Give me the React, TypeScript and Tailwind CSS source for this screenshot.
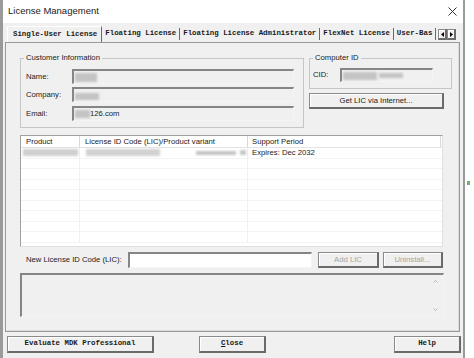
import React from "react";

const ui = "font-['Liberation_Sans',Arial,sans-serif] text-[7.7px] text-[#1a1a1a]";
const mono = "font-['Liberation_Mono',monospace] text-[7.4px] font-bold text-[#1a1a1a]";
const sunken = "border-t-2 border-l-2 border-[#858585] border-r border-b border-r-[#f4f4f4] border-b-[#f4f4f4]";
const raised = "border border-[#8a8a8a] border-r-2 border-b-2 border-r-[#6a6a6a] border-b-[#6a6a6a] bg-[#f0f0f0] shadow-[inset_1px_1px_0_#ffffff]";

function Blur({ className }: { className: string }) {
  return <div className={"bg-[#c4c4c4] blur-[1px] " + className} />;
}

function Field({ children }: { children?: React.ReactNode }) {
  return (
    <div className={"h-[15px] w-[222px] bg-[#f0f0f0] flex items-center pl-[1px] " + sunken}>
      {children}
    </div>
  );
}

// last tab is cut by the scroll arrows in the original dialog
const tabs = [
  "Single-User License",
  "Floating License",
  "Floating License Administrator",
  "FlexNet License",
  "User-Bas",
];

export default function App() {
  const rows = Array.from({ length: 9 });
  return (
    <div className="w-[474px] h-[358px] bg-white flex overflow-hidden">
      <div className="w-[465px] h-full bg-[#f0f0f0] border-l-[3px] border-r-2 border-[#9a9a9a] flex flex-col">
        {/* title bar */}
        <div className="h-[23px] bg-white flex items-center justify-between pl-[5px] pr-[6px]">
          <span className="font-['Liberation_Sans',Arial,sans-serif] text-[9.5px] text-[#222]">License Management</span>
          <svg width="9" height="9" viewBox="0 0 9 9">
            <path d="M0.5 0.5L8.5 8.5M8.5 0.5L0.5 8.5" stroke="#333" strokeWidth="1" />
          </svg>
        </div>

        {/* tabs */}
        <div className="mt-[3px] h-[16px] flex items-end">
          <div className="w-[434px] flex overflow-hidden h-full items-end">
            {tabs.map((t, i) => (
              <div
                key={t}
                className={
                  i === 0
                    ? "h-[16px] ml-[4px] pl-[5px] pr-[4px] flex items-center border-t border-l border-white border-r border-r-[#6a6a6a] bg-[#f0f0f0] shrink-0 " + mono
                    : "h-[12px] mb-[2px] pl-[3px] pr-[3px] flex items-center border-r border-[#6a6a6a] shrink-0 whitespace-nowrap " + mono
                }
              >
                {t}
              </div>
            ))}
          </div>
          <div className="flex mb-[2px] ml-[1px]">
            <div className={"w-[9px] h-[11px] flex items-center justify-center " + raised}>
              <svg width="3" height="5" viewBox="0 0 3 5"><path d="M3 0L0 2.5L3 5Z" fill="#000" /></svg>
            </div>
            <div className={"w-[9px] h-[11px] flex items-center justify-center " + raised}>
              <svg width="3" height="5" viewBox="0 0 3 5"><path d="M0 0L3 2.5L0 5Z" fill="#000" /></svg>
            </div>
          </div>
        </div>

        {/* tab panel */}
        <div className="ml-[2px] w-[455px] h-[290px] border border-[#9a9a9a] shadow-[inset_-1px_-1px_0_#dcdcdc] flex flex-col pl-[14px] pt-[11px]">
          <div className="flex gap-[5px]">
            <fieldset className="w-[284px] h-[74px] border border-[#c6c6c6] px-[3px]">
              <legend className={"px-[2px] leading-[8px] " + ui}>Customer Information</legend>
              <div className="flex flex-col pt-[7px]">
                <div className="flex items-center h-[15px]">
                  <span className={"w-[48px] pl-[2px] " + ui}>Name:</span>
                  <Field>
                    <Blur className="w-[22px] h-[9px]" />
                  </Field>
                </div>
                <div className="flex items-center h-[15px] mt-[3px]">
                  <span className={"w-[48px] pl-[2px] " + ui}>Company:</span>
                  <Field>
                    <Blur className="w-[24px] h-[7px] mt-[3px]" />
                  </Field>
                </div>
                <div className="flex items-center h-[15px] mt-[4px]">
                  <span className={"w-[48px] pl-[2px] " + ui}>Email:</span>
                  <Field>
                    <Blur className="w-[15px] h-[8px]" />
                    <span className={ui}>126.com</span>
                  </Field>
                </div>
              </div>
            </fieldset>

            <div className="flex flex-col w-[143px]">
              <fieldset className="h-[35px] border border-[#c6c6c6] px-[3px]">
                <legend className={"px-[2px] leading-[8px] " + ui}>Computer ID</legend>
                <div className="flex items-center pt-[6px]">
                  <span className={"w-[27px] " + ui}>CID:</span>
                  <div className={"h-[14px] w-[93px] bg-[#f0f0f0] flex items-center pl-[1px] " + sunken}>
                    <Blur className="w-[34px] h-[8px]" />
                    <Blur className="w-[24px] h-[5px] bg-[#9a9a9a] ml-[2px]" />
                  </div>
                </div>
              </fieldset>
              <button className={"mt-[4px] w-[135px] h-[16px] flex items-center justify-center " + raised + " " + ui}>
                Get LIC via Internet...
              </button>
            </div>
          </div>

          {/* list */}
          <div className="mt-[7px] w-[423px] h-[112px] bg-white border border-[#a0a0a0] border-r-[#e0e0e0] border-b-[#e0e0e0] flex flex-col overflow-hidden">
            <div className="h-[12px] flex border-b border-[#e3e3e3] shrink-0">
              <div className={"w-[59px] pl-[5px] border-r border-[#d8d8d8] flex items-center " + ui}>Product</div>
              <div className={"w-[168px] pl-[5px] border-r border-[#d8d8d8] flex items-center " + ui}>License ID Code (LIC)/Product variant</div>
              <div className={"flex-1 pl-[4px] border-r border-[#d8d8d8] mr-[1px] flex items-center " + ui}>Support Period</div>
            </div>
            {rows.map((_, i) => (
              <div key={i} className="h-[10.5px] flex border-b border-[#f3f3f3] shrink-0">
                <div className="w-[59px] border-r border-[#f0f0f0] flex items-center pl-[2px]">
                  {i === 0 && <Blur className="w-[55px] h-[7px] bg-[#cfcfcf]" />}
                </div>
                <div className="w-[168px] border-r border-[#f0f0f0] flex items-center pl-[6px]">
                  {i === 0 && (
                    <>
                      <Blur className="w-[74px] h-[7px] bg-[#d2d2d2]" />
                      <Blur className="w-[40px] h-[4px] bg-[#a8a8a8] ml-[36px]" />
                      <Blur className="w-[6px] h-[5px] bg-[#c8c8c8] ml-[4px]" />
                    </>
                  )}
                </div>
                <div className={"flex-1 flex items-center pl-[4px] " + ui}>{i === 0 && "Expires: Dec 2032"}</div>
              </div>
            ))}
          </div>

          {/* new license row */}
          <div className="mt-[5px] w-[423px] h-[16px] flex items-center">
            <span className={"w-[108px] pl-[6px] " + ui}>New License ID Code (LIC):</span>
            <div className={"w-[184px] h-[16px] bg-white " + sunken} />
            <button className={"ml-[6px] w-[61px] h-[16px] flex items-center justify-center " + raised + " " + ui + " text-[#a3a3a3]"}>
              Add LIC
            </button>
            <button className={"ml-[4px] w-[60px] h-[16px] flex items-center justify-center " + raised + " " + ui + " text-[#a3a3a3]"}>
              Uninstall...
            </button>
          </div>

          {/* message area */}
          <div className={"mt-[5px] w-[424px] h-[44px] bg-[#f0f0f0] flex justify-end " + sunken}>
            <div className="w-[11px] mr-[2px] flex flex-col items-center justify-between py-[5px]">
              <svg width="5" height="3" viewBox="0 0 5 3"><path d="M0.5 2.5L2.5 0.5L4.5 2.5" stroke="#b5b5b5" fill="none" /></svg>
              <svg width="5" height="3" viewBox="0 0 5 3"><path d="M0.5 0.5L2.5 2.5L4.5 0.5" stroke="#b5b5b5" fill="none" /></svg>
            </div>
          </div>
        </div>

        {/* bottom buttons */}
        <div className="mt-[4px] h-[17px] flex">
          <button className={"ml-[4px] w-[147px] h-[17px] flex items-center justify-center " + raised + " " + mono}>
            Evaluate MDK Professional
          </button>
          <button className={"ml-[45px] w-[67px] h-[17px] flex items-center justify-center " + raised + " " + mono}>
            <span className="underline">C</span>lose
          </button>
          <button className={"ml-auto mr-[2px] w-[67px] h-[17px] flex items-center justify-center " + raised + " " + mono}>
            Help
          </button>
        </div>
      </div>
      <div className="flex-1">
        <div className="mt-[181px] ml-[2px] w-[3px] h-[4px] bg-[#6fb36f] blur-[0.5px]" />
      </div>
    </div>
  );
}
